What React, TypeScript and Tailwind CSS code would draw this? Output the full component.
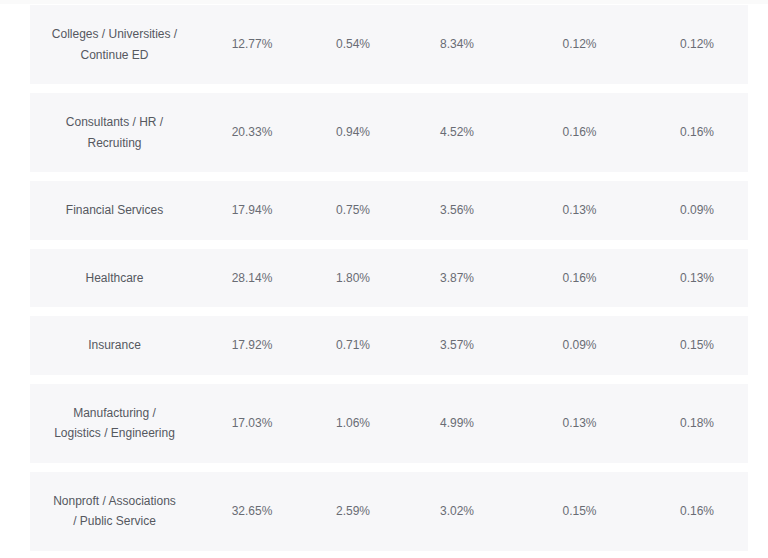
import React from "react";

interface Row {
  label: string[];
  values: string[];
}

const rows: Row[] = [
  { label: ["Colleges / Universities /", "Continue ED"], values: ["12.77%", "0.54%", "8.34%", "0.12%", "0.12%"] },
  { label: ["Consultants / HR /", "Recruiting"], values: ["20.33%", "0.94%", "4.52%", "0.16%", "0.16%"] },
  { label: ["Financial Services"], values: ["17.94%", "0.75%", "3.56%", "0.13%", "0.09%"] },
  { label: ["Healthcare"], values: ["28.14%", "1.80%", "3.87%", "0.16%", "0.13%"] },
  { label: ["Insurance"], values: ["17.92%", "0.71%", "3.57%", "0.09%", "0.15%"] },
  { label: ["Manufacturing /", "Logistics / Engineering"], values: ["17.03%", "1.06%", "4.99%", "0.13%", "0.18%"] },
  { label: ["Nonproft / Associations", "/ Public Service"], values: ["32.65%", "2.59%", "3.02%", "0.15%", "0.16%"] },
];

export default function App() {
  return (
    <div
      className="w-[768px] h-[558px] bg-white overflow-hidden"
      style={{ fontFamily: '"Liberation Sans", Arial, sans-serif' }}
    >
      <div className="h-[4px] bg-[#fafafa]" />
      <div className="flex flex-col gap-[9px] pl-[30px] pr-[20px] pt-[1px]">
        {rows.map((row, i) => (
          <div
            key={i}
            className="grid grid-cols-[169px_106px_96px_112px_133px_102px] items-center bg-[#f7f7f9] py-[19px] text-[12px] leading-[20.5px]"
          >
            <div className="text-center text-[#55585f]">
              {row.label.map((l, j) => (
                <div key={j}>{l}</div>
              ))}
            </div>
            {row.values.map((v, j) => (
              <div key={j} className="text-center text-[#696c74]">
                {v}
              </div>
            ))}
          </div>
        ))}
      </div>
    </div>
  );
}
